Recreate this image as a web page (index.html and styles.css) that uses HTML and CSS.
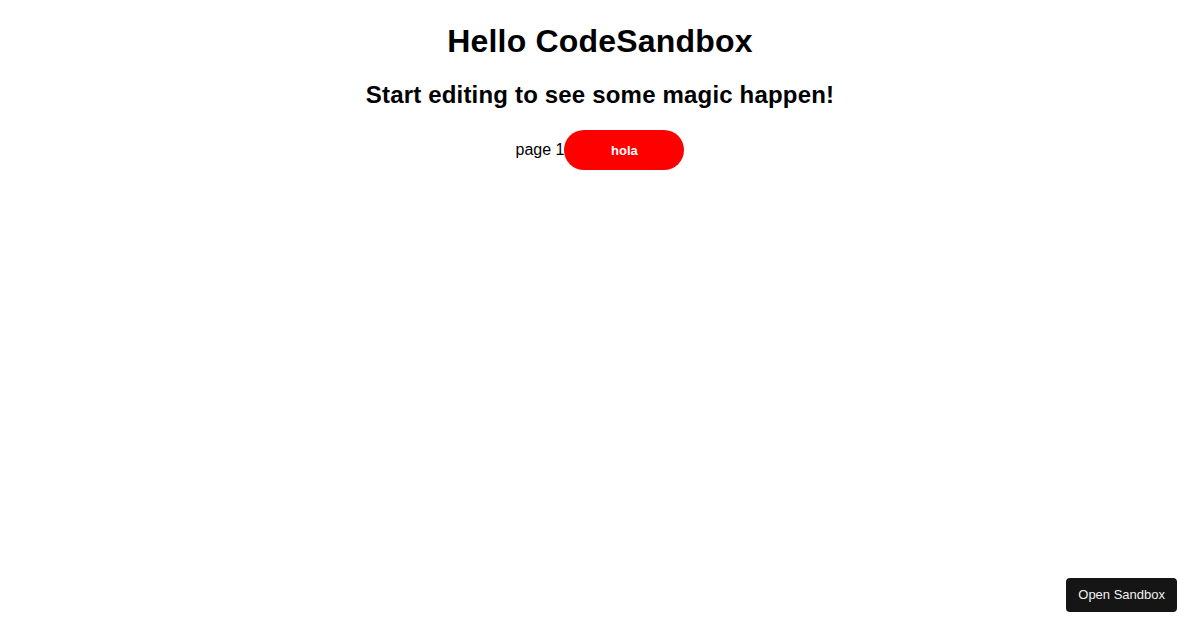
FILE: index.html
```html
<!DOCTYPE html>
<html>
<head>
<meta charset="utf-8">
<link rel="stylesheet" href="styles.css">
</head>
<body>
<div class="app">
  <h1 class="title">Hello CodeSandbox</h1>
  <h2 class="subtitle">Start editing to see some magic happen!</h2>
  <div class="page-row">
    <span class="page-label">page 1</span><button class="hola-btn">hola</button>
  </div>
</div>
<a class="open-sandbox">Open Sandbox</a>
</body>
</html>
```
FILE: styles.css
```css
html, body {
  background: #ffffff;
}
body {
  margin: 8px;
}
.app {
  font-family: "Liberation Sans", Arial, sans-serif;
  text-align: center;
  color: #000;
}
.title {
  font-size: 32px;
  letter-spacing: 0.2px;
  margin: 15px 0 21px;
  font-weight: bold;
}
.subtitle {
  font-size: 24px;
  letter-spacing: 0.18px;
  margin: 20px 0 21px;
  font-weight: bold;
}
.page-row {
  font-size: 16px;
  display: flex;
  justify-content: center;
  align-items: center;
}
.page-label {
  line-height: 18px;
}
.hola-btn {
  width: 120px;
  height: 40px;
  border: none;
  border-radius: 20px;
  background: #ff0000;
  color: #ffffff;
  font-family: "Liberation Sans", Arial, sans-serif;
  font-weight: bold;
  font-size: 13px;
  padding: 0;
}
.open-sandbox {
  position: fixed;
  right: 23px;
  bottom: 18px;
  background: #151515;
  color: #f2f2f2;
  font-family: "Liberation Sans", Arial, sans-serif;
  font-size: 13px;
  padding: 0 12px;
  height: 34px;
  line-height: 34px;
  border-radius: 4px;
}
```
